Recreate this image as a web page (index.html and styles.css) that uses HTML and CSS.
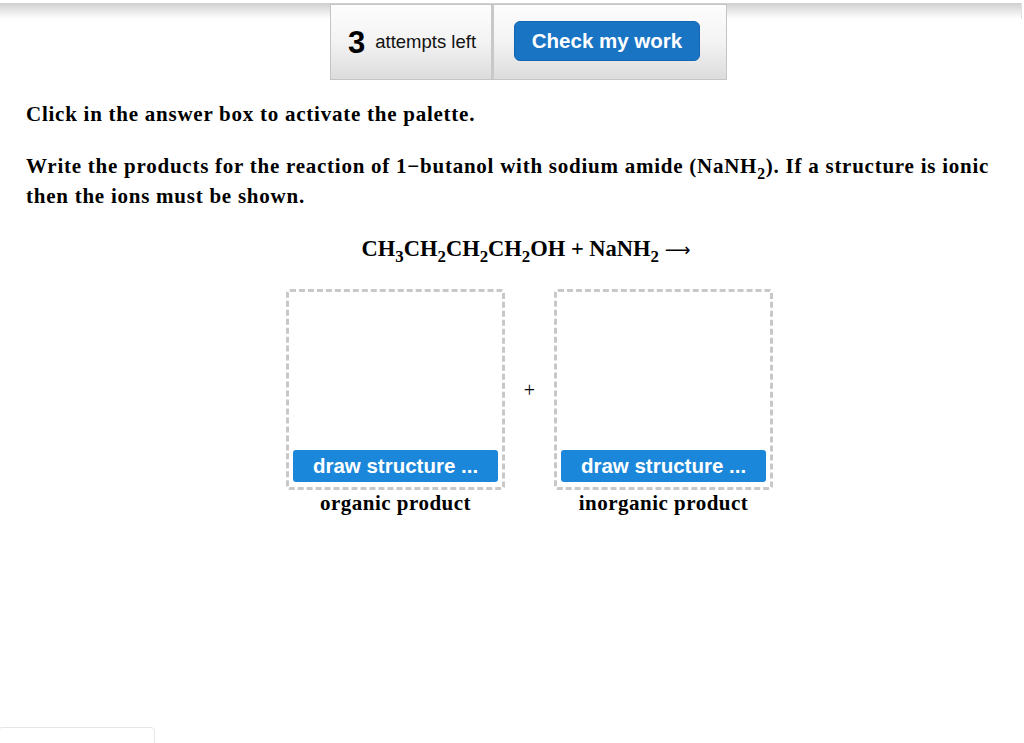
FILE: index.html
```html
<!DOCTYPE html>
<html>
<head>
<meta charset="utf-8">
<link rel="stylesheet" href="styles.css">
</head>
<body>
<div class="topbar"></div>
<div class="toolbar">
  <div class="cell attempts"><span class="num">3</span><span class="att">attempts left</span></div>
  <div class="cell check"><button class="check-btn">Check my work</button></div>
</div>
<div class="content">
  <p class="p1">Click in the answer box to activate the palette.</p>
  <p class="p2">Write the products for the reaction of 1&minus;butanol with sodium amide (NaNH<sub>2</sub>). If a structure is ionic then the ions must be shown.</p>
  <div class="eq">CH<sub>3</sub>CH<sub>2</sub>CH<sub>2</sub>CH<sub>2</sub>OH + NaNH<sub>2</sub> <span class="arrow">&#x27F6;</span></div>
  <div class="answers">
    <div class="ans">
      <div class="box"><button class="draw">draw structure ...</button></div>
      <div class="label">organic product</div>
    </div>
    <div class="plus">+</div>
    <div class="ans">
      <div class="box"><button class="draw">draw structure ...</button></div>
      <div class="label">inorganic product</div>
    </div>
  </div>
</div>
<div class="footer-box"></div>
</body>
</html>
```
FILE: styles.css
```css
html, body { margin: 0; padding: 0; background: #fff; }
body { width: 1024px; height: 743px; overflow: hidden; position: relative; }
.topbar {
  position: absolute; left: 0; top: 3px; width: 1021px; height: 16px;
  background: linear-gradient(#cfcfcf, #f2f2f2 70%, #fff);
  border-right: 1px solid #e0e0e0;
}
.toolbar {
  position: relative; z-index: 1;
  display: flex; margin: 4px 0 0 330px; width: 397px; height: 76px;
  border: 1px solid #c4c4c4; box-sizing: border-box;
  background: linear-gradient(#fdfdfd, #f3f3f3 50%, #dcdcdc);
}
.cell { display: flex; align-items: center; height: 100%; box-sizing: border-box; }
.attempts { width: 163px; border-right: 3px solid #c8c8c8; padding-left: 17px; font-family: "Liberation Sans", Arial, sans-serif; }
.num { font-size: 31px; font-weight: bold; color: #000; margin-right: 10px; line-height: 1; }
.att { font-size: 18.5px; color: #111; }
.check { flex: 1; padding-left: 20px; }
.check-btn {
  width: 186px; height: 40px; border: 1px solid #1565b0; border-radius: 6px;
  background: #1a74c4; color: #fff; font-family: "Liberation Sans", Arial, sans-serif;
  font-weight: bold; font-size: 20.5px; padding: 0; margin-top: -2px;
}
.content { font-family: "Liberation Serif", "Times New Roman", serif; font-weight: bold; color: #000; padding: 0 26px; }
.p1 { font-size: 21px; letter-spacing: 0.75px; margin: 22px 0 0; line-height: 25px; }
.p2 { font-size: 21px; letter-spacing: 0.75px; margin: 24px 0 0; line-height: 30px; }
sub { font-size: 0.75em; vertical-align: -0.35em; line-height: 0; }
.eq { text-align: center; font-size: 22.5px; margin: 26px 0 0 28px; line-height: 24px; }
.arrow { font-family: "DejaVu Sans", sans-serif; font-weight: normal; font-size: 18px; }
.answers { display: flex; align-items: flex-start; margin: 27px 0 0 260px; }
.box {
  width: 219px; height: 201px; border: 3px dashed #c8c8c8; border-radius: 4px; box-sizing: border-box;
  display: flex; align-items: flex-end; justify-content: center; padding-bottom: 5px;
}
.draw {
  width: 205px; height: 32px; border: none; border-radius: 3px; background: #1b87da; color: #fff;
  font-family: "Liberation Sans", Arial, sans-serif; font-weight: bold; font-size: 20.5px; padding: 0;
}
.label { text-align: center; font-size: 21px; letter-spacing: 0.5px; line-height: 24px; margin-top: 1px; }
.plus { width: 49px; text-align: center; margin-top: 90px; font-family: "Liberation Serif", serif; font-weight: normal; font-size: 20px; }
.footer-box {
  position: absolute; left: -2px; top: 727px; width: 155px; height: 30px;
  border: 1px solid #e6e6e6; border-radius: 4px;
}
```
